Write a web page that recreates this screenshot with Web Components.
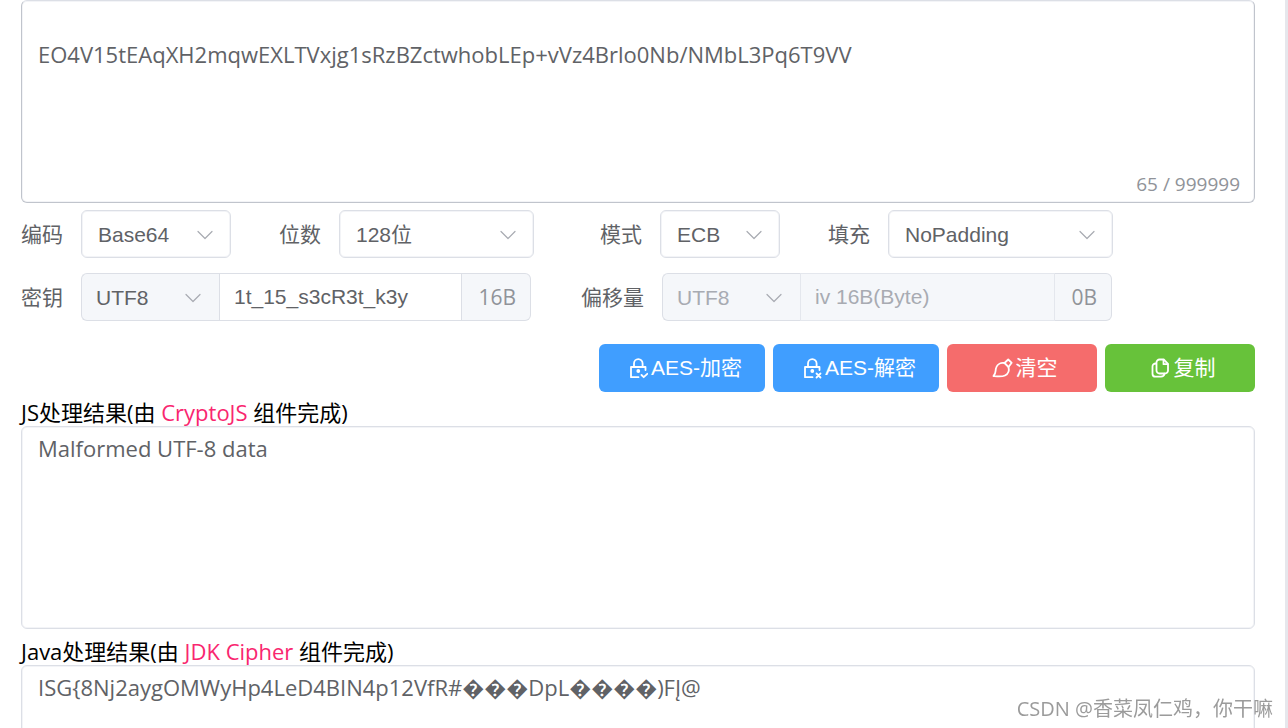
<!DOCTYPE html>
<html lang="zh-CN">
<head>
<meta charset="utf-8">
<meta name="viewport" content="width=device-width, initial-scale=1">
<title>AES 加密 / 解密</title>
<style>
  html { scrollbar-width: none; }
  body {
    margin: 0;
    background: #e6e7ec;
    --sans: "Liberation Sans", "Noto Sans CJK SC", sans-serif;
    --ui: "Open Sans", "Noto Sans CJK SC", sans-serif;
    --line: #dcdfe6;
    --text: #606266;
    --muted: #909399;
    --fill: #f5f7fa;
    font-family: var(--ui);
    font-size: 21px;
    color: var(--text);
  }
</style>
</head>
<body>
<aes-tool></aes-tool>

<script>
const define = (name, html, setup) => {
  const template = document.createElement('template');
  template.innerHTML = html;
  customElements.define(name, class extends HTMLElement {
    connectedCallback() {
      if (this.shadowRoot) return;
      const root = this.attachShadow({ mode: 'open' });
      root.append(template.content.cloneNode(true));
      if (setup) setup(this, root);
    }
  });
};

/* Multi-line text area with an optional character counter */
define('text-area', `
  <style>
    :host { display: block; position: relative; }
    textarea {
      display: block; box-sizing: border-box; width: 100%; height: 203px;
      margin: 0; padding: 5px 16px; resize: none; outline: 0; overflow: hidden;
      border: 1px solid var(--line); border-radius: 6px; background: #fff;
      font: 22px/32px var(--ui); color: var(--text);
      box-shadow: inset 0 0 0 1px #f3f4f7;
    }
    :host([active]) textarea { border-color: #c0c4cc; border-top-color: var(--line); }
    .count { position: absolute; right: 15px; bottom: 6px; font-size: 19px; line-height: 25px; color: var(--muted); }
    .count:empty { display: none; }
  </style>
  <textarea spellcheck="false"></textarea><span class="count"></span>`,
  (el, root) => {
    const area = root.querySelector('textarea');
    area.setAttribute('aria-label', el.getAttribute('label'));
    area.textContent = el.getAttribute('value');
    area.value = el.getAttribute('value');
    const max = el.getAttribute('max');
    if (max) root.querySelector('.count').textContent = area.value.length + ' / ' + max;
  });

/* Drop-down, standalone or attached to the front of an input */
define('select-box', `
  <style>
    :host { display: grid; position: relative; color: var(--text); }
    select {
      appearance: none; box-sizing: border-box; width: 100%; height: 48px; margin: 0; padding: 0 16px;
      border: 1px solid var(--line); border-radius: 6px; background: #fff; outline: 0;
      font: 21px var(--sans); color: inherit; opacity: 1;
      box-shadow: inset 0 0 0 1px #f3f4f7;
    }
    :host([attached]) select { padding: 0 14px; border-right: 0; border-radius: 6px 0 0 6px; background: var(--fill); box-shadow: none; }
    :host([disabled]) { color: #a8abb2; }
    svg { position: absolute; right: 17px; top: 16px; width: 18px; height: 18px; pointer-events: none; }
  </style>
  <select></select>
  <svg viewBox="0 0 18 18" fill="none" stroke="#a8abb2" stroke-width="1.2" stroke-linecap="round" stroke-linejoin="round"><path d="M2 5.5 9 12.5 16 5.5"/></svg>`,
  (el, root) => {
    const select = root.querySelector('select');
    select.setAttribute('aria-label', el.getAttribute('label'));
    select.disabled = el.hasAttribute('disabled');
    for (const name of el.getAttribute('options').split(',')) select.add(new Option(name));
  });

/* Text input with a charset drop-down before it and a byte count after it */
define('byte-input', `
  <style>
    :host { display: flex; height: 48px; width: 450px; }
    select-box { flex: 0 0 138px; }
    input {
      flex: 1; min-width: 0; box-sizing: border-box; margin: 0; padding: 0 14px; outline: 0; border-radius: 0;
      border: 1px solid var(--line); background: #fff; font: 21px var(--sans); color: var(--text);
    }
    input:disabled { background: var(--fill); border-color: #e4e7ed; }
    input::placeholder { color: #a8abb2; opacity: 1; }
    .size {
      display: flex; align-items: center; padding: 0 14px 0 16px;
      border: 1px solid var(--line); border-left: 0; border-radius: 0 6px 6px 0;
      background: var(--fill); color: var(--muted);
    }
  </style>
  <select-box attached options="UTF8,HEX,Base64"></select-box>
  <input type="text">
  <span class="size"></span>`,
  (el, root) => {
    const input = root.querySelector('input');
    const box = root.querySelector('select-box');
    input.setAttribute('aria-label', el.getAttribute('label'));
    box.setAttribute('label', el.getAttribute('label') + '编码');
    input.value = el.getAttribute('value') || '';
    input.placeholder = el.getAttribute('placeholder') || '';
    input.disabled = el.hasAttribute('disabled');
    root.querySelector('.size').textContent = el.getAttribute('size');
  });

define('form-field', `
  <style>
    :host { display: flex; align-items: center; gap: 18px; }
    span { white-space: nowrap; line-height: 30px; }
  </style>
  <span></span><slot></slot>`,
  (el, root) => { root.querySelector('span').textContent = el.getAttribute('label'); });

const lock = '<path d="M7 9V5.5a4.300 4.300 0 0 1 8.600 0V9M18.500 12V9H4v10.200h7.500"/><circle cx="11.300" cy="13" r="1" fill="currentColor"/>';
const icons = {
  encrypt: lock + '<path d="m14.500 17 2.200 2.200 3.600-3.400"/>',
  decrypt: lock + '<path d="m15.500 15.500 4 4m0-4-4 4"/>',
  clear: '<path d="M1.500 18C4.500 15 3 12.500 4.200 9.500 5.500 6 9 4.300 12.500 5l4 4c1 4-.5 7-3.500 8.500-3.500 1.700-7.500 1-11.500.5Z"/><path d="m12.500 5 3.700-3.500 3.500 3.300L16.500 9"/>',
  copy: '<path d="M9.500 1.500h4.200l4.300 4.300v6.700a3 3 0 0 1-3 3H9.500a3 3 0 0 1-3-3v-8a3 3 0 0 1 3-3Z"/><path d="M13.500 2v4.200h4M6 5.500C3.500 5.500 2.500 7 2.500 8.500v7.200a3 3 0 0 0 3 3h5.500c2 0 3.200-1 3.500-3"/>'
};

define('action-button', `
  <style>
    :host { display: block; width: 150px; --bg: #409eff; }
    :host([wide]) { width: 166px; }
    :host([kind="danger"]) { --bg: #f56c6c; }
    :host([kind="success"]) { --bg: #67c23a; }
    button {
      display: flex; align-items: center; justify-content: center; gap: 3px;
      width: 100%; height: 48px; margin: 0; padding: 0 0 0 5px; border: 0; border-radius: 6px;
      background: var(--bg); color: #fff; font: 21px/30px var(--sans); white-space: nowrap; cursor: pointer;
    }
    svg { width: 21px; height: 21px; flex: none; }
  </style>
  <button type="button"><svg viewBox="0 0 21 21" fill="none" stroke="currentColor" stroke-width="1.800" stroke-linecap="round" stroke-linejoin="round" aria-hidden="true"></svg><slot></slot></button>`,
  (el, root) => { root.querySelector('svg').innerHTML = icons[el.getAttribute('icon')]; });

define('result-panel', `
  <style>
    :host { display: block; }
    p { margin: 0; height: 27px; font-size: 22px; line-height: 27px; color: #000; white-space: nowrap; }
    a { color: #f9266f; text-decoration: none; }
  </style>
  <p><span class="name"></span>处理结果(由 <a href="#"></a> 组件完成)</p>
  <text-area></text-area>`,
  (el, root) => {
    const name = el.getAttribute('name');
    root.querySelector('.name').textContent = name;
    root.querySelector('a').textContent = el.getAttribute('lib');
    const area = root.querySelector('text-area').shadowRoot.querySelector('textarea');
    area.textContent = area.value = el.getAttribute('value');
    area.setAttribute('aria-label', name + '处理结果');
  });

define('page-mark', `
  <style>
    :host { position: fixed; right: 15px; bottom: 5px; font-size: 20px; line-height: 28px; color: #9b9b9b; text-shadow: 1px 1px 0 #fff; white-space: nowrap; pointer-events: none; }
  </style>
  <slot></slot>`);

define('aes-tool', `
  <style>
    :host { display: block; margin-right: 3px; padding: 0 30px 0 21px; background: #fff; }
    .row { display: flex; margin-top: 7px; }
    .row + .row { margin-top: 15px; }
    .basic { gap: 48px; }
    .basic .mode { margin-left: 18px; }
    .keys { gap: 50px; }
    .w150 { width: 150px; } .w195 { width: 195px; } .w120 { width: 120px; } .w225 { width: 225px; }
    .actions { display: flex; justify-content: flex-end; gap: 8px; margin: 23px 0 7px; }
    .results { display: grid; gap: 9px; }
  </style>
  <text-area active label="待处理内容" max="999999" value="&#10;EO4V15tEAqXH2mqwEXLTVxjg1sRzBZctwhobLEp+vVz4Brlo0Nb/NMbL3Pq6T9VV"></text-area>
  <div class="row basic">
    <form-field label="编码"><select-box class="w150" label="编码" options="Base64,HEX"></select-box></form-field>
    <form-field label="位数"><select-box class="w195" label="位数" options="128位,192位,256位"></select-box></form-field>
    <form-field class="mode" label="模式"><select-box class="w120" label="模式" options="ECB,CBC,CTR"></select-box></form-field>
    <form-field label="填充"><select-box class="w225" label="填充" options="NoPadding,Pkcs7"></select-box></form-field>
  </div>
  <div class="row keys">
    <form-field label="密钥"><byte-input label="密钥" value="1t_15_s3cR3t_k3y" size="16B"></byte-input></form-field>
    <form-field label="偏移量"><byte-input disabled label="偏移量" placeholder="iv 16B(Byte)" size="0B"></byte-input></form-field>
  </div>
  <div class="actions">
    <action-button wide icon="encrypt">AES-加密</action-button>
    <action-button wide icon="decrypt">AES-解密</action-button>
    <action-button kind="danger" icon="clear">清空</action-button>
    <action-button kind="success" icon="copy">复制</action-button>
  </div>
  <div class="results">
    <result-panel name="JS" lib="CryptoJS" value="Malformed UTF-8 data"></result-panel>
    <result-panel name="Java" lib="JDK Cipher" value="ISG{8Nj2aygOMWyHp4LeD4BIN4p12VfR#\uFFFD\uFFFD\uFFFDDpL\uFFFD\uFFFD\uFFFD\uFFFD)F\u012E@"></result-panel>
  </div>
  <page-mark>CSDN @香菜凤仁鸡，你干嘛</page-mark>`,
  (el, root) => {
    for (const field of root.querySelectorAll('byte-input[disabled]')) {
      const box = field.shadowRoot.querySelector('select-box');
      box.setAttribute('disabled', '');
      box.shadowRoot.querySelector('select').disabled = true;
    }
  });
</script>
</body>
</html>
